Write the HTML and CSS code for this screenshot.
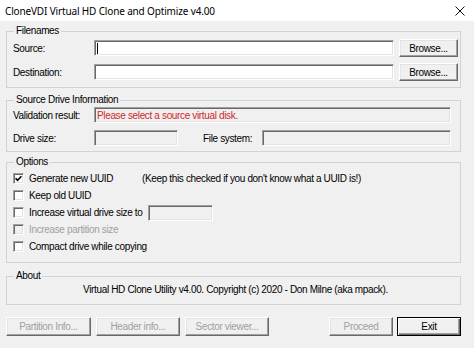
FILE: index.html
```html
<!DOCTYPE html>
<html lang="en">
<head>
<meta charset="utf-8">
<title>CloneVDI Virtual HD Clone and Optimize v4.00</title>
<link rel="stylesheet" href="styles.css">
</head>
<body>
<div class="window">
  <header class="titlebar">
    <span class="title">CloneVDI Virtual HD Clone and Optimize v4.00</span>
    <svg class="close" width="10" height="10" viewBox="0 0 10 10" aria-hidden="true"><path d="M0.5 0.5 L9.5 9.5 M9.5 0.5 L0.5 9.5" stroke="#111" stroke-width="1" fill="none"/></svg>
  </header>
  <main class="client">
    <fieldset class="group g-files">
      <legend>Filenames</legend>
      <div class="rows rows-files">
        <div class="row row-file">
          <span class="lbl">Source:</span>
          <div class="field white f-path"><span class="caret"></span></div>
          <button class="btn browse">Browse...</button>
        </div>
        <div class="row row-file">
          <span class="lbl">Destination:</span>
          <div class="field white f-path"></div>
          <button class="btn browse">Browse...</button>
        </div>
      </div>
    </fieldset>

    <fieldset class="group g-drive">
      <legend>Source Drive Information</legend>
      <div class="rows rows-drive">
        <div class="row row-info">
          <span class="lbl">Validation result:</span>
          <div class="field f-grow"><span class="err">Please select a source virtual disk.</span></div>
        </div>
        <div class="row row-info">
          <span class="lbl">Drive size:</span>
          <div class="field f-size"></div>
          <span class="lbl lbl-fs">File system:</span>
          <div class="field f-grow"></div>
        </div>
      </div>
    </fieldset>

    <fieldset class="group g-opts">
      <legend>Options</legend>
      <div class="rows">
        <div class="row row-cb">
          <span class="cb-item cb-w1"><span class="cb checked"><svg width="7" height="7" viewBox="0 0 7 7"><path d="M0.6 3.2 L2.6 5.4 L6.4 1.2" stroke="#000" stroke-width="1.6" fill="none"/></svg></span><span>Generate new UUID</span></span>
          <span class="note">(Keep this checked if you don't know what a UUID is!)</span>
        </div>
        <div class="row row-cb">
          <span class="cb-item"><span class="cb"></span><span>Keep old UUID</span></span>
        </div>
        <div class="row row-cb">
          <span class="cb-item cb-w3"><span class="cb"></span><span>Increase virtual drive size to</span></span>
          <div class="field f-inc"></div>
        </div>
        <div class="row row-cb disabled">
          <span class="cb-item"><span class="cb off"></span><span>Increase partition size</span></span>
        </div>
        <div class="row row-cb">
          <span class="cb-item"><span class="cb"></span><span>Compact drive while copying</span></span>
        </div>
      </div>
    </fieldset>

    <fieldset class="group g-about">
      <legend>About</legend>
      <p class="about">Virtual HD Clone Utility v4.00. Copyright (c) 2020 - Don Milne (aka mpack).</p>
    </fieldset>

    <div class="buttons">
      <button class="btn dis b-part">Partition Info...</button>
      <button class="btn dis b-head">Header info...</button>
      <button class="btn dis b-sect">Sector viewer...</button>
      <button class="btn dis b-proc">Proceed</button>
      <button class="btn def b-exit">Exit</button>
    </div>
  </main>
</div>
</body>
</html>
```

FILE: styles.css
```css
* { box-sizing: border-box; }

body {
  margin: 0;
  background: #f0f0f0;
  color: #000;
  font-family: "Liberation Sans", Arial, sans-serif;
  font-size: 10px;
  letter-spacing: -0.35px;
}

.window {
  width: 474px;
  height: 348px;
  overflow: hidden;
  background: #f0f0f0;
}

.titlebar {
  height: 21px;
  background: #fff;
  display: flex;
  align-items: center;
  padding: 0 9px 0 5px;
}

.title {
  font-family: "Noto Sans", "Open Sans", sans-serif;
  font-size: 10px;
  letter-spacing: -0.15px;
  color: #000;
  flex: 1;
}

.close { display: block; }

.client {
  width: 474px;
  padding: 4px 13px 0 6px;
}

.group {
  margin: 0;
  min-width: 0;
  border: 1px solid #d2d2d2;
  padding: 0 2px 0 6px;
}

.group legend {
  margin-left: 1px;
  padding: 0 2px;
  line-height: 12px;
  font-size: 10px;
}

.g-files { padding: 2px 2px 6px 6px; }
.g-drive { margin-top: 6px; padding: 1px 9px 5px 6px; }
.g-opts  { margin-top: 4px; padding: 2px 2px 7px 6px; }
.g-about { margin-top: 7px; padding: 1px 2px 7px 6px; }

.rows { display: flex; flex-direction: column; }
.rows-files { gap: 6px; }
.rows-drive { gap: 7px; }

.row { display: flex; align-items: center; }
.row-file { height: 18px; }
.row-info { height: 16px; }
.row-cb { height: 17px; }

.lbl { width: 81px; flex: none; white-space: nowrap; }
.lbl-fs { width: 59px; margin-left: 25px; }

.field {
  height: 16px;
  background: #f0f0f0;
  border: 1px solid;
  border-color: #a0a0a0 #fff #fff #a0a0a0;
  box-shadow: inset 1px 1px #696969, inset -1px -1px #e3e3e3;
  display: flex;
  align-items: center;
  padding-left: 2px;
  overflow: hidden;
}
.field.white { background: #fff; }
.f-path { width: 300px; }
.f-grow { flex: 1; }
.f-size { width: 84px; }
.f-inc { width: 65px; }

.caret {
  width: 1px;
  height: 11px;
  background: #000;
}

.err { color: #d02828; white-space: nowrap; }

.btn {
  font: inherit;
  letter-spacing: inherit;
  color: #000;
  background: #f0f0f0;
  padding: 0;
  margin: 0;
  border: 1px solid;
  border-color: #fff #696969 #696969 #fff;
  box-shadow: inset -1px -1px #a0a0a0, inset 1px 1px #e3e3e3;
  text-align: center;
  white-space: nowrap;
}

.browse { width: 59px; height: 18px; margin-left: 5px; }

.btn.dis { color: #a0a0a0; }
.btn.def {
  border: 1px solid #000;
  box-shadow: inset 1px 1px #fff, inset -1px -1px #696969, inset -2px -2px #a0a0a0;
}

.cb-item { display: inline-flex; align-items: center; white-space: nowrap; }
.cb-w1 { width: 129px; }
.cb-w3 { width: 135px; }

.cb {
  width: 11px;
  height: 11px;
  flex: none;
  margin-right: 5px;
  background: #fff;
  border: 1px solid;
  border-color: #a0a0a0 #fff #fff #a0a0a0;
  box-shadow: inset 1px 1px #696969, inset -1px -1px #e3e3e3;
  display: flex;
  align-items: center;
  justify-content: center;
}
.cb svg { display: block; }
.cb.off { background: #f0f0f0; }

.disabled { color: #a0a0a0; }

.note { white-space: nowrap; }

.about {
  margin: 0;
  line-height: 14px;
  text-align: center;
}

.buttons {
  display: flex;
  margin-top: 12px;
  height: 19px;
  gap: 5px;
}
.buttons .btn { height: 19px; }
.b-part { width: 85px; }
.b-head { width: 84px; }
.b-sect { width: 84px; }
.b-proc { width: 64px; margin-left: auto; }
.b-exit { width: 64px; margin-left: -1px; }
```
